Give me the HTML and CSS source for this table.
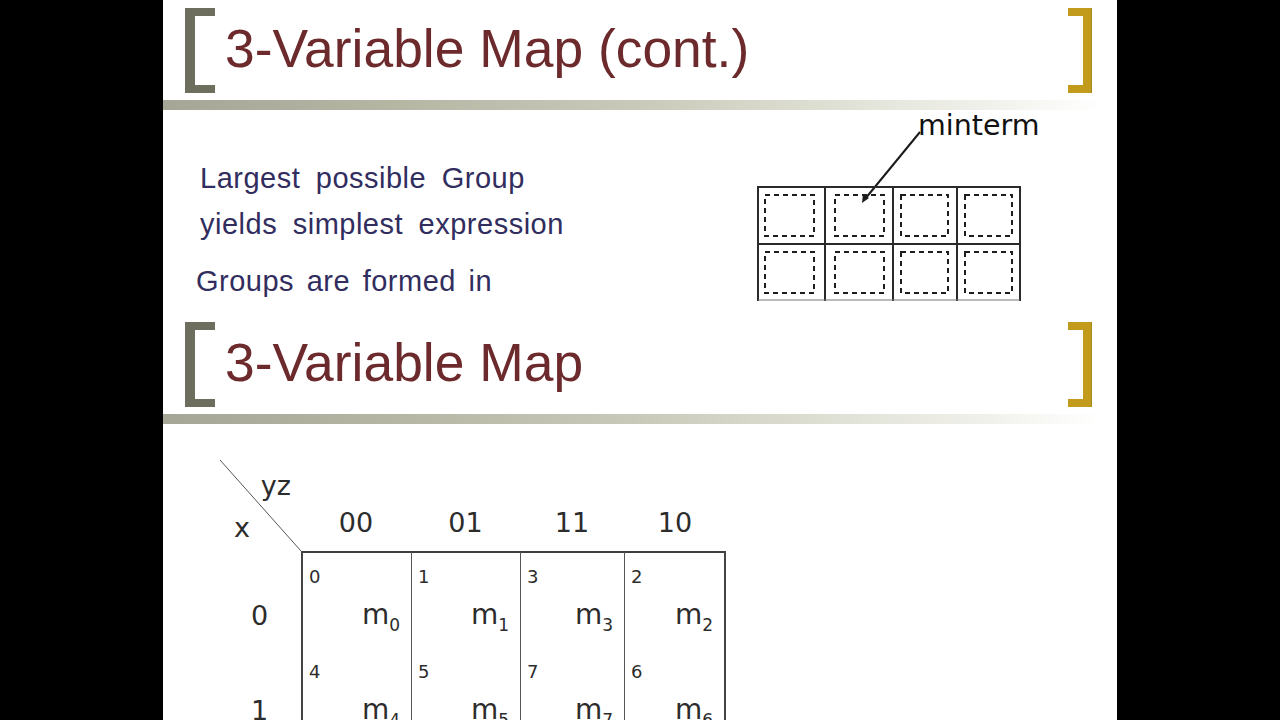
FILE: index.html
```html
<!DOCTYPE html>
<html lang="en">
<head>
<meta charset="utf-8">
<title>3-Variable Map</title>
<link rel="stylesheet" href="styles.css">
</head>
<body>
<main class="screen">
  <section class="slide slide-top">
    <header class="slide-head">
      <span class="bracket bracket-l"></span>
      <h1 class="title">3-Variable Map (cont.)</h1>
      <span class="bracket bracket-r"></span>
    </header>
    <div class="rule"></div>
    <div class="slide-body">
      <div class="bullets">
        <p class="pt">Largest possible Group<br>yields simplest expression</p>
        <p class="pt pt2">Groups are formed in</p>
      </div>
      <figure class="minterm-fig">
        <svg width="283" height="192" viewBox="0 0 283 192">
          <text x="161" y="25" class="mt-label">minterm</text>
          <line x1="163" y1="22" x2="108" y2="89" stroke="#1a1a1a" stroke-width="2"/>
          <polygon points="105,93 106,84 112,88" fill="#1a1a1a"/>
          <g stroke="#2a2a2a" stroke-width="2" fill="none">
            <line x1="1" y1="77" x2="263" y2="77"/>
            <line x1="1" y1="134" x2="263" y2="134"/>
            <line x1="1" y1="76" x2="1" y2="191"/>
            <line x1="68" y1="76" x2="68" y2="191"/>
            <line x1="136" y1="76" x2="136" y2="191"/>
            <line x1="200" y1="76" x2="200" y2="191"/>
            <line x1="263" y1="76" x2="263" y2="191"/>
          </g>
          <line x1="1" y1="190" x2="263" y2="190" stroke="#777" stroke-width="1.2"/>
          <g stroke="#1e1e1e" stroke-width="2" fill="none" stroke-dasharray="5 4">
            <rect x="8" y="85" width="49" height="41"/>
            <rect x="78" y="85" width="49" height="41"/>
            <rect x="144" y="85" width="47" height="41"/>
            <rect x="208" y="85" width="47" height="41"/>
            <rect x="8" y="142" width="49" height="41"/>
            <rect x="78" y="142" width="49" height="41"/>
            <rect x="144" y="142" width="47" height="41"/>
            <rect x="208" y="142" width="47" height="41"/>
          </g>
        </svg>
      </figure>
    </div>
  </section>

  <section class="slide slide-bottom">
    <header class="slide-head">
      <span class="bracket bracket-l"></span>
      <h1 class="title">3-Variable Map</h1>
      <span class="bracket bracket-r"></span>
    </header>
    <div class="rule"></div>
    <div class="kmap">
      <div class="corner">
        <svg class="diag" width="83" height="96" viewBox="0 0 83 96">
          <line x1="2" y1="5" x2="83" y2="96" stroke="#555" stroke-width="1"/>
        </svg>
        <span class="var var-yz">yz</span>
        <span class="var var-x">x</span>
      </div>
      <div class="colhead">00</div>
      <div class="colhead">01</div>
      <div class="colhead">11</div>
      <div class="colhead">10</div>

      <div class="rowhead">0</div>
      <div class="cell top first"><span class="idx">0</span><span class="mterm">m<sub>0</sub></span></div>
      <div class="cell top"><span class="idx">1</span><span class="mterm">m<sub>1</sub></span></div>
      <div class="cell top"><span class="idx">3</span><span class="mterm">m<sub>3</sub></span></div>
      <div class="cell top last"><span class="idx">2</span><span class="mterm">m<sub>2</sub></span></div>

      <div class="rowhead">1</div>
      <div class="cell first"><span class="idx">4</span><span class="mterm">m<sub>4</sub></span></div>
      <div class="cell"><span class="idx">5</span><span class="mterm">m<sub>5</sub></span></div>
      <div class="cell"><span class="idx">7</span><span class="mterm">m<sub>7</sub></span></div>
      <div class="cell last"><span class="idx">6</span><span class="mterm">m<sub>6</sub></span></div>
    </div>
  </section>
</main>
</body>
</html>
```

FILE: styles.css
```css
html, body {
  margin: 0;
  padding: 0;
  background: #000;
}

body {
  display: flex;
  justify-content: center;
  height: 720px;
  overflow: hidden;
}

.screen {
  width: 954px;
  height: 720px;
  background: #fff;
  overflow: hidden;
  display: flex;
  flex-direction: column;
}

.slide {
  flex: none;
  overflow: hidden;
}

.slide-top {
  height: 314px;
}

.slide-bottom {
  height: 406px;
}

.slide-head {
  display: flex;
  align-items: center;
  height: 93px;
  padding: 8px 26px 0 22px;
  box-sizing: border-box;
}

.bracket {
  flex: none;
  height: 85px;
  box-sizing: border-box;
}

.bracket-l {
  width: 30px;
  border: 8px solid #6d6e5e;
  border-left-width: 10px;
  border-right: none;
}

.bracket-r {
  width: 23px;
  margin-left: auto;
  border: 8px solid #c29b1d;
  border-left: none;
  box-shadow: 1px 0 0 #a88a22;
}

.title {
  margin: -4px 0 0 10px;
  font-family: "Liberation Sans", Arial, sans-serif;
  font-weight: normal;
  font-size: 53.4px;
  line-height: 1;
  color: #6c2a2c;
  white-space: nowrap;
}

.rule {
  height: 10px;
  margin-top: 7px;
  width: 940px;
  background: linear-gradient(90deg, #a6a696 0%, #b6b6a5 25%, #c9c9b9 50%, #dedfd3 70%, #f1f1ec 88%, #ffffff 100%);
}

.slide-body {
  display: flex;
  align-items: flex-start;
}

.bullets {
  padding-left: 37px;
  padding-top: 45px;
}

.pt {
  margin: 0;
  font-family: "Liberation Sans", Arial, sans-serif;
  font-size: 29px;
  line-height: 46px;
  letter-spacing: 0.5px;
  word-spacing: 7px;
  color: #312d5e;
  white-space: nowrap;
}

.pt2 {
  margin-top: 11px;
  margin-left: -4px;
  word-spacing: 4px;
}

.minterm-fig {
  margin: 0 77px 0 auto;
  width: 283px;
  height: 192px;
}

.minterm-fig svg {
  display: block;
}

.mt-label {
  font-family: "DejaVu Sans", sans-serif;
  font-size: 28.5px;
  fill: #111;
}

/* K-map */
.kmap {
  display: grid;
  grid-template-columns: 83px 110px 109px 104px 102px;
  grid-template-rows: 96px 95px 95px;
  margin: 31px 0 0 55px;
  font-family: "DejaVu Sans", "Liberation Sans", sans-serif;
  color: #2c2c2c;
}

.corner {
  position: relative;
  display: flex;
  flex-direction: column;
}

.diag {
  position: absolute;
  left: 0;
  top: 0;
}

.var {
  font-size: 27px;
  line-height: 27px;
}

.var-yz {
  align-self: flex-end;
  margin: 17px 10px 0 0;
}

.var-x {
  align-self: flex-start;
  margin: 15px 0 0 16px;
}

.colhead {
  display: flex;
  align-items: flex-end;
  justify-content: center;
  padding-bottom: 15px;
  box-sizing: border-box;
  font-size: 27px;
  line-height: 27px;
}

.rowhead {
  text-align: center;
  font-size: 27px;
  line-height: 27px;
  padding-top: 51px;
  box-sizing: border-box;
}

.cell {
  display: flex;
  flex-direction: column;
  border-left: 1px solid #555;
  padding: 17px 11px 0 6px;
  box-sizing: border-box;
}

.cell.top {
  border-top: 2px solid #3e3e3e;
  padding-top: 15px;
}

.cell.first {
  border-left: 2px solid #444;
}

.cell.last {
  border-right: 2px solid #444;
}

.idx {
  font-size: 18px;
  line-height: 18px;
}

.mterm {
  align-self: flex-end;
  margin-top: 15px;
  font-size: 28px;
  line-height: 28px;
}

.mterm sub {
  font-size: 17px;
  line-height: 0;
  vertical-align: -7px;
}
```
